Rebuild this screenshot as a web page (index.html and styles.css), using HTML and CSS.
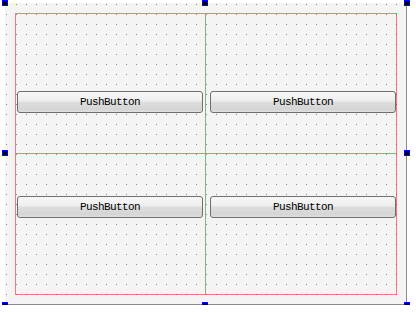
FILE: index.html
```html
<!DOCTYPE html>
<html lang="en">
<head>
    <meta charset="UTF-8">
    <title>Form</title>
    <link rel="stylesheet" href="styles.css">
</head>
<body>
<div class="form">
    <div class="layout">
        <div class="cell cell-top cell-left"><button class="push">PushButton</button></div>
        <div class="cell cell-top cell-right"><button class="push">PushButton</button></div>
        <div class="cell cell-bottom cell-left"><button class="push">PushButton</button></div>
        <div class="cell cell-bottom cell-right"><button class="push">PushButton</button></div>
    </div>
    <span class="handle h-left h-top"></span>
    <span class="handle h-mid-x h-top"></span>
    <span class="handle h-right h-top"></span>
    <span class="handle h-left h-mid-y"></span>
    <span class="handle h-right h-mid-y"></span>
    <span class="handle h-left h-bottom"></span>
    <span class="handle h-mid-x h-bottom"></span>
    <span class="handle h-right h-bottom"></span>
</div>
</body>
</html>
```

FILE: styles.css
```css
body {
    margin: 0;
    background: #ffffff;
}

.form {
    position: relative;
    box-sizing: border-box;
    width: 402px;
    height: 302px;
    margin: 3px 0 0 5px;
    padding: 10px 0 0 10px;
    border-right: 1px solid #8c8c8c;
    border-bottom: 1px solid #8c8c8c;
    background-color: #f4f4f4;
    background-image:
        linear-gradient(90deg, #f4f4f4 9px, transparent 9px),
        linear-gradient(#f4f4f4 9px, #8a8a8a 9px);
    background-size: 10px 10px;
    background-position: 2px 2px;
}

.layout {
    box-sizing: border-box;
    width: 382px;
    height: 282px;
    border: 1px solid rgba(255, 0, 0, 0.5);
    display: grid;
    grid-template-columns: 190px 190px;
    grid-template-rows: 140px 140px;
}

.cell {
    box-sizing: border-box;
}

.cell-top {
    padding-top: 77px;
    border-bottom: 1px solid rgba(0, 128, 0, 0.5);
}

.cell-bottom {
    padding-top: 42px;
}

.cell-left {
    padding-left: 1px;
    border-right: 1px solid rgba(0, 128, 0, 0.5);
}

.cell-right {
    padding-left: 4px;
}

.push {
    display: block;
    box-sizing: border-box;
    width: 186px;
    height: 22px;
    margin: 0;
    padding: 1px 0 0 0;
    border: 1px solid #6e6e6e;
    border-radius: 3px;
    background: linear-gradient(#f7f7f7 0%, #ededed 46%, #dddddd 50%, #d5d5d5 88%, #e2e2e2 100%);
    font-family: "Liberation Mono", monospace;
    font-size: 11px;
    letter-spacing: -0.6px;
    line-height: 19px;
    color: #000000;
    text-align: center;
}

.handle {
    position: absolute;
    box-sizing: border-box;
    width: 6px;
    height: 6px;
    border: 1px solid #0000ff;
    background: #000000;
}

.h-left { left: -3px; }
.h-mid-x { left: 197px; }
.h-right { left: 399px; }
.h-top { top: -3px; }
.h-mid-y { top: 147px; }
.h-bottom { top: 299px; }
```
